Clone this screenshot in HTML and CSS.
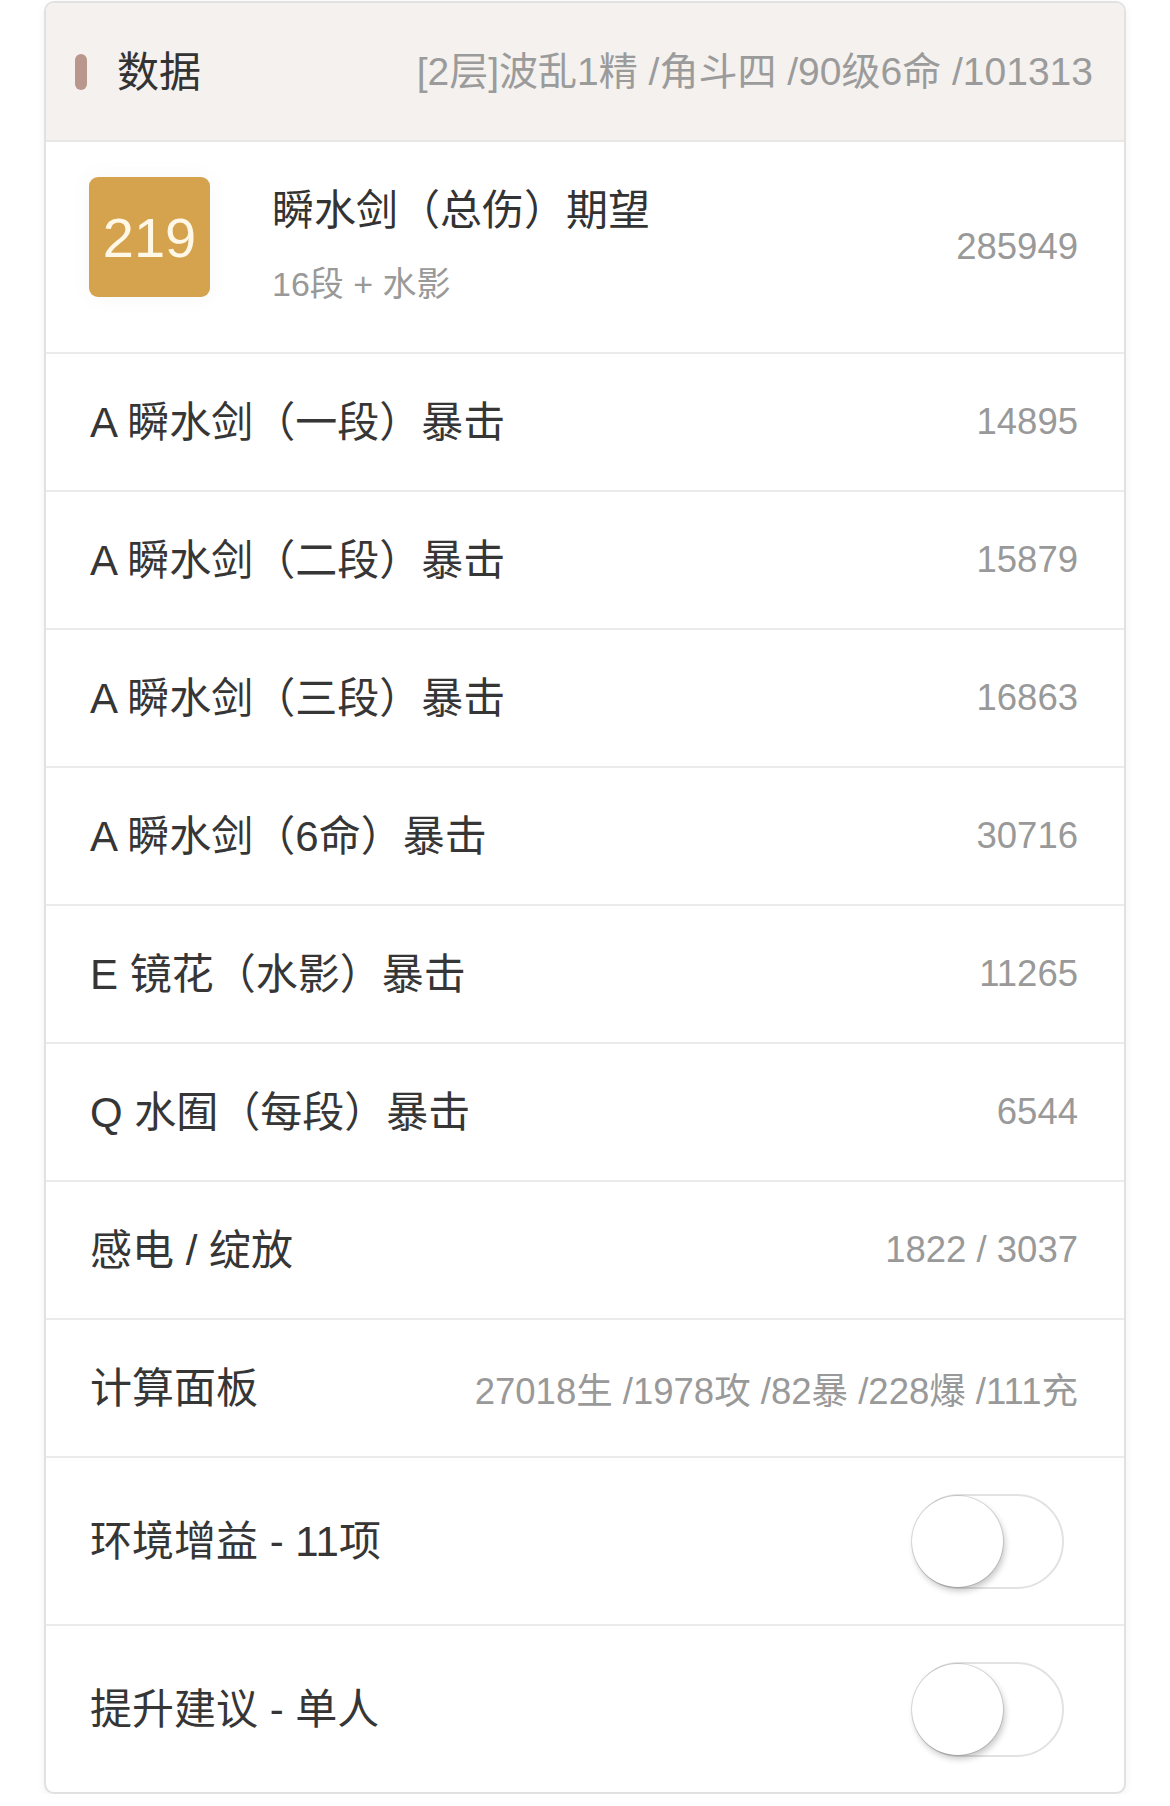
FILE: index.html
```html
<!DOCTYPE html>
<html lang="zh-CN">

<head>
  <meta charset="UTF-8">
  <meta name="viewport" content="width=device-width, initial-scale=1.0">
  <link rel="stylesheet" href="styles.css">
  <title>数据</title>
</head>

<body>
  <main class="card">
    <header class="head">
      <span class="head-mark"></span>
      <h1 class="head-title">数据</h1>
      <span class="head-info">[2层]波乱1精 /角斗四 /90级6命 /101313</span>
    </header>

    <section class="summary">
      <div class="badge">219</div>
      <div class="summary-text">
        <div class="summary-title">瞬水剑（总伤）期望</div>
        <div class="summary-sub">16段 + 水影</div>
      </div>
      <span class="value">285949</span>
    </section>

    <ul class="rows">
      <li class="row"><span class="label">A 瞬水剑（一段）暴击</span><span class="value">14895</span></li>
      <li class="row"><span class="label">A 瞬水剑（二段）暴击</span><span class="value">15879</span></li>
      <li class="row"><span class="label">A 瞬水剑（三段）暴击</span><span class="value">16863</span></li>
      <li class="row"><span class="label">A 瞬水剑（6命）暴击</span><span class="value">30716</span></li>
      <li class="row"><span class="label">E 镜花（水影）暴击</span><span class="value">11265</span></li>
      <li class="row"><span class="label">Q 水囿（每段）暴击</span><span class="value">6544</span></li>
      <li class="row"><span class="label">感电 / 绽放</span><span class="value">1822 / 3037</span></li>
      <li class="row"><span class="label">计算面板</span><span class="value">27018生 /1978攻 /82暴 /228爆 /111充</span></li>
      <li class="row row-switch">
        <span class="label">环境增益 - 11项</span>
        <label class="switch"><input type="checkbox"><span class="knob"></span></label>
      </li>
      <li class="row row-switch">
        <span class="label">提升建议 - 单人</span>
        <label class="switch"><input type="checkbox"><span class="knob"></span></label>
      </li>
    </ul>
  </main>
</body>

</html>
```

FILE: styles.css
```css
body {
  margin: 0;
  padding: 1px 44px 0;
  font-family: "Liberation Sans", "Noto Sans CJK SC", sans-serif;
  color: #363636;
  background: #fff;
}

.card {
  border: 2px solid #e1e1e1;
  border-radius: 10px;
  overflow: hidden;
  background: #fff;
  box-shadow: 0 3px 8px rgba(0, 0, 0, 0.06);
}

.head {
  display: flex;
  align-items: center;
  height: 137px;
  padding: 0 31px 0 29px;
  background: #f4f1ee;
  border-bottom: 2px solid #e9e6e3;
}

.head-mark {
  width: 12px;
  height: 36px;
  border-radius: 6px;
  background: #b9978c;
}

.head-title {
  margin: 0 0 0 30px;
  padding-bottom: 7px;
  font-size: 42px;
  font-weight: normal;
  color: #333;
}

.head-info {
  margin-left: auto;
  padding-bottom: 7px;
  font-size: 39px;
  color: #9b9b9b;
}

.summary {
  display: flex;
  align-items: center;
  height: 210px;
  padding: 0 46px 0 43px;
  border-bottom: 2px solid #ebebeb;
}

.badge {
  display: flex;
  align-items: center;
  justify-content: center;
  width: 121px;
  height: 120px;
  margin-bottom: 20px;
  border-radius: 9px;
  background: #d5a24e;
  color: #fff8e6;
  font-size: 56px;
  box-shadow: 0 0 24px rgba(0, 0, 0, 0.04);
}

.summary-text {
  margin: 0 0 5px 62px;
}

.summary-title {
  font-size: 42px;
  line-height: 58px;
  color: #333;
}

.summary-sub {
  margin-top: 20px;
  font-size: 34px;
  line-height: 48px;
  color: #999;
}

.value {
  margin-left: auto;
  font-size: 36.5px;
  color: #999;
  white-space: nowrap;
}

.rows {
  margin: 0;
  padding: 0;
  list-style: none;
}

.row {
  display: flex;
  align-items: center;
  height: 136px;
  padding: 0 46px 0 44px;
  border-bottom: 2px solid #ebebeb;
}

.row-switch {
  height: 166px;
}

.row:last-child {
  border-bottom: none;
}

.label {
  padding-bottom: 7px;
  font-size: 42px;
  color: #363636;
  white-space: nowrap;
}

.switch {
  position: relative;
  margin-left: auto;
  margin-right: 14px;
  box-sizing: border-box;
  width: 152px;
  height: 95px;
  border: 2px solid #e2e2e2;
  border-radius: 48px;
  background: #fff;
}

.switch input {
  display: none;
}

.knob {
  position: absolute;
  left: -2px;
  top: 0;
  width: 91px;
  height: 91px;
  border-radius: 50%;
  background: #fff;
  box-shadow: 0 0 0 1px rgba(0, 0, 0, 0.12), 2px 4px 6px rgba(0, 0, 0, 0.22);
}
```
